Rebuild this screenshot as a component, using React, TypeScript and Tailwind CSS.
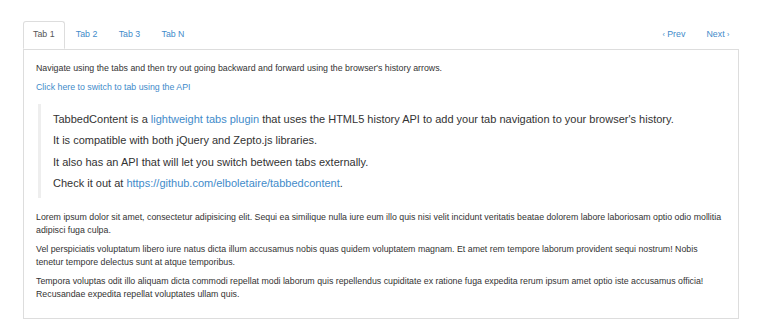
const tabs = ['Tab 1', 'Tab 2', 'Tab 3', 'Tab N']

const lorem = [
  'Lorem ipsum dolor sit amet, consectetur adipisicing elit. Sequi ea similique nulla iure eum illo quis nisi velit incidunt veritatis beatae dolorem labore laboriosam optio odio mollitia adipisci fuga culpa.',
  'Vel perspiciatis voluptatum libero iure natus dicta illum accusamus nobis quas quidem voluptatem magnam. Et amet rem tempore laborum provident sequi nostrum! Nobis tenetur tempore delectus sunt at atque temporibus.',
  'Tempora voluptas odit illo aliquam dicta commodi repellat modi laborum quis repellendus cupiditate ex ratione fuga expedita rerum ipsum amet optio iste accusamus officia! Recusandae expedita repellat voluptates ullam quis.',
]

export default function App() {
  return (
    <div className="w-[768px] h-[331px] bg-white pt-[21px] pl-[23px] text-[8.8px] leading-[12.86px] text-[#333] font-['Liberation_Sans',Arial,sans-serif]">
      <div className="w-[716px]">
        <div className="flex items-end">
          <ul className="flex">
            {tabs.map((t, i) => (
              <li key={t} className="mr-[1.3px]">
                <a
                  href="#"
                  className={
                    i === 0
                      ? 'block px-[9px] py-[6.4px] bg-white border border-[#ddd] border-b-white rounded-t-[3px] -mb-px relative text-[#555]'
                      : 'block px-[9px] py-[6.4px] border border-transparent text-[#428bca]'
                  }
                >
                  {t}
                </a>
              </li>
            ))}
          </ul>
          <div className="ml-auto flex">
            <a href="#" className="block px-[9.6px] py-[6.4px] mr-[2px] text-[#428bca]">
              <span className="text-[7px]">‹</span> Prev
            </a>
            <a href="#" className="block px-[9.6px] py-[6.4px] text-[#428bca]">
              Next <span className="text-[7px]">›</span>
            </a>
          </div>
        </div>

        <div className="border border-[#ddd] p-[12px] pb-[10.5px]">
          <p className="mb-[6.4px]">
            Navigate using the tabs and then try out going backward and forward using the browser's history arrows.
          </p>
          <p className="mb-[6.4px]">
            <a href="#" className="text-[#428bca]">Click here to switch to tab using the API</a>
          </p>

          <blockquote className="mt-[10px] ml-[1.5px] mb-[13px] border-l-[3px] border-[#eee] pl-[12.5px] pt-[7px] pb-[7px] text-[11px] leading-[16px] text-[#333]">
            <p className="mb-[5.5px]">
              TabbedContent is a <a href="#" className="text-[#428bca]">lightweight tabs plugin</a> that uses the HTML5 history API to add your tab navigation to your browser's history.
            </p>
            <p className="mb-[5.5px]">It is compatible with both jQuery and Zepto.js libraries.</p>
            <p className="mb-[5.5px]">It also has an API that will let you switch between tabs externally.</p>
            <p>
              Check it out at <a href="#" className="text-[#428bca]">https://github.com/elboletaire/tabbedcontent</a>.
            </p>
          </blockquote>

          {lorem.map((p) => (
            <p key={p.slice(0, 12)} className="mb-[6.4px]">
              {p}
            </p>
          ))}
        </div>
      </div>
    </div>
  )
}
